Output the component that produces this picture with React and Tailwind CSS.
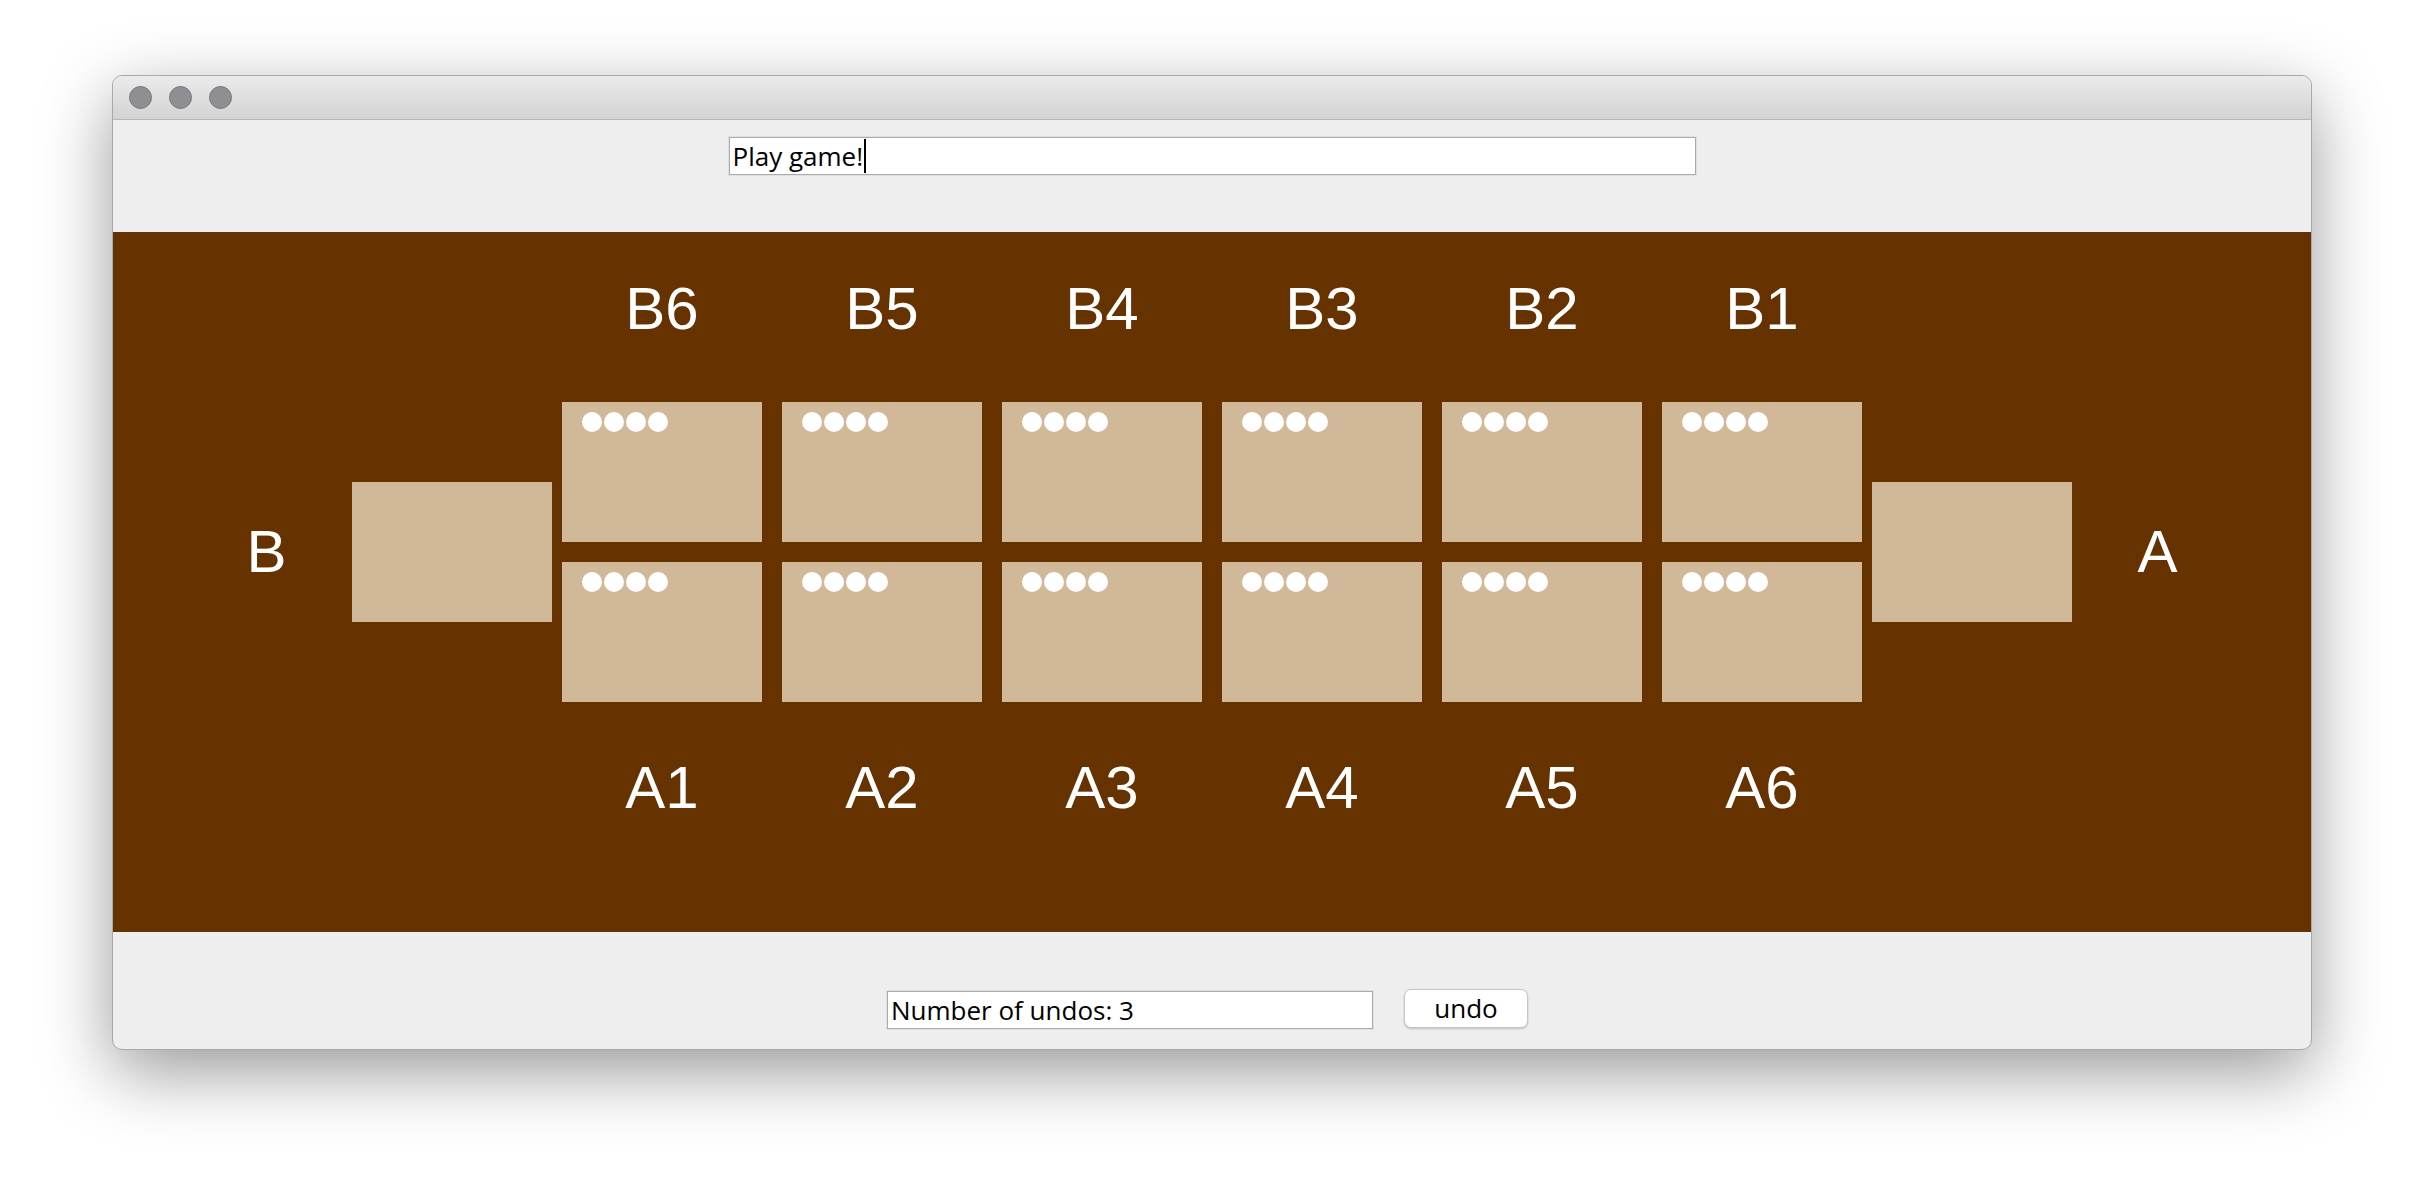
import React from 'react';

const topLabels = ['B6', 'B5', 'B4', 'B3', 'B2', 'B1'];
const bottomLabels = ['A1', 'A2', 'A3', 'A4', 'A5', 'A6'];

// a pit with its stones drawn as small white dots
function Pit({ stones = 4 }) {
  return (
    <div className="w-[200px] h-[140px] bg-[#d0b898] flex items-start gap-[2px] pl-[20px] pt-[10px]">
      {Array.from({ length: stones }).map((_, i) => (
        <div key={i} className="w-[20px] h-[20px] rounded-full bg-white" />
      ))}
    </div>
  );
}

function LabelRow({ labels, className }) {
  return (
    <div className={`flex gap-[20px] items-center ${className}`}>
      {labels.map((l) => (
        <div key={l} className="w-[200px] text-center text-white text-[60px] leading-[60px]">
          {l}
        </div>
      ))}
    </div>
  );
}

export default function App() {
  const swing = { fontFamily: '"Open Sans", "DejaVu Sans", sans-serif' };
  const board = { fontFamily: '"Liberation Sans", Arial, sans-serif' };

  return (
    <div className="min-h-screen w-full bg-white flex justify-center pt-[75px]">
      <div className="w-[2200px] h-[975px] rounded-[10px] overflow-hidden border border-[#a9a9a9] bg-[#eeeeee] flex flex-col shadow-[0_22px_70px_rgba(0,0,0,0.4)]">
        {/* title bar */}
        <div className="h-[44px] shrink-0 border-b border-[#b6b6b6] bg-gradient-to-b from-[#ebebeb] to-[#d3d3d3] flex items-center gap-[17px] pl-[16px]">
          <div className="w-[23px] h-[23px] rounded-full bg-[#8f8f93] border border-[#7a7a7e]" />
          <div className="w-[23px] h-[23px] rounded-full bg-[#8f8f93] border border-[#7a7a7e]" />
          <div className="w-[23px] h-[23px] rounded-full bg-[#8f8f93] border border-[#7a7a7e]" />
        </div>

        {/* message field */}
        <div className="h-[112px] shrink-0 flex justify-center pt-[17px]" style={swing}>
          <div className="w-[967px] h-[38px] bg-white border border-[#ababab] shadow-[0_0_0_1px_#e0e0e0] flex items-center pl-[3px] text-[26px] text-black">
            <span>Play game!</span>
            <span className="w-[2px] h-[34px] bg-black ml-[1px]" />
          </div>
        </div>

        {/* board */}
        <div className="h-[700px] shrink-0 bg-[#663300] flex" style={board}>
          <div className="w-[240px] pt-[250px]">
            <div className="h-[140px] flex items-center justify-center pl-[68px] text-white text-[60px] leading-[60px]">B</div>
          </div>
          <div className="w-[200px] pt-[250px]">
            <div className="w-[200px] h-[140px] bg-[#d0b898]" />
          </div>
          <div className="w-[1300px] ml-[10px] flex flex-col">
            <LabelRow labels={topLabels} className="h-[170px] pb-[16px]" />
            <div className="flex gap-[20px]">
              {topLabels.map((l) => (
                <Pit key={l} />
              ))}
            </div>
            <div className="flex gap-[20px] mt-[20px]">
              {bottomLabels.map((l) => (
                <Pit key={l} />
              ))}
            </div>
            <LabelRow labels={bottomLabels} className="h-[172px]" />
          </div>
          <div className="w-[200px] ml-[10px] pt-[250px]">
            <div className="w-[200px] h-[140px] bg-[#d0b898]" />
          </div>
          <div className="w-[240px] pt-[250px]">
            <div className="h-[140px] flex items-center justify-center pr-[68px] text-white text-[60px] leading-[60px]">A</div>
          </div>
        </div>

        {/* undo controls */}
        <div className="flex-1 flex justify-center items-start gap-[31px] pt-[57px] pr-[9px]" style={swing}>
          <div className="w-[486px] h-[38px] mt-[2px] bg-white border border-[#ababab] shadow-[0_0_0_1px_#e0e0e0] flex items-center pl-[3px] text-[26px] text-black">
            Number of undos: 3
          </div>
          <button className="w-[124px] h-[39px] bg-white border border-[#c6c6c6] rounded-[7px] shadow-[0_1px_2px_rgba(0,0,0,0.2)] flex items-center justify-center text-[26px] text-black">
            undo
          </button>
        </div>
      </div>
    </div>
  );
}
